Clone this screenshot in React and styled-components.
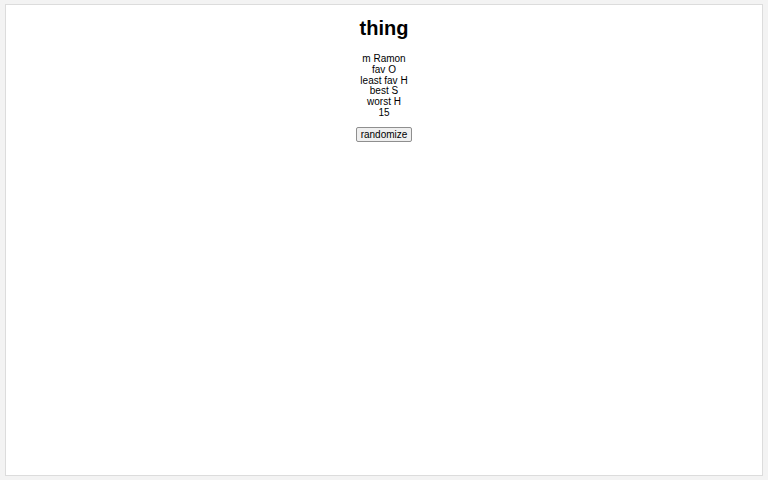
import React, { useState } from "react";
import styled, { createGlobalStyle } from "styled-components";

const Global = createGlobalStyle`
  html, body { margin: 0; padding: 0; background: #f3f3f3; height: 100%; }
  body { font-family: "Liberation Sans", Arial, sans-serif; }
  #root { height: 100%; }
`;

const Frame = styled.div`
  box-sizing: border-box;
  margin: 4px 5px 0 5px;
  height: 472px;
  background: #ffffff;
  border: 1px solid #dcdcdc;
  display: flex;
  flex-direction: column;
  align-items: center;
  text-align: center;
  color: #000;
`;

const Title = styled.h1`
  font-size: 20px;
  font-weight: bold;
  margin: 12px 0 14px 0;
  line-height: 23px;
`;

const Lines = styled.div`
  font-size: 10px;
  line-height: 10.8px;
`;

const Line = styled.div``;

const Button = styled.button`
  margin-top: 8px;
  font-family: "Liberation Sans", Arial, sans-serif;
  font-size: 10px;
  padding: 1px 4px;
  line-height: 11px;
  background: #efefef;
  border: 1px solid #8f8f8f;
  border-radius: 2px;
  color: #000;
`;

export default function App() {
  const [data] = useState({
    m: "Ramon",
    fav: "O",
    leastFav: "H",
    best: "S",
    worst: "H",
    n: 15,
  });
  return (
    <>
      <Global />
      <Frame>
        <Title>thing</Title>
        <Lines>
          <Line>m {data.m}</Line>
          <Line>fav {data.fav}</Line>
          <Line>least fav {data.leastFav}</Line>
          <Line>best {data.best}</Line>
          <Line>worst {data.worst}</Line>
          <Line>{data.n}</Line>
        </Lines>
        <Button>randomize</Button>
      </Frame>
    </>
  );
}
